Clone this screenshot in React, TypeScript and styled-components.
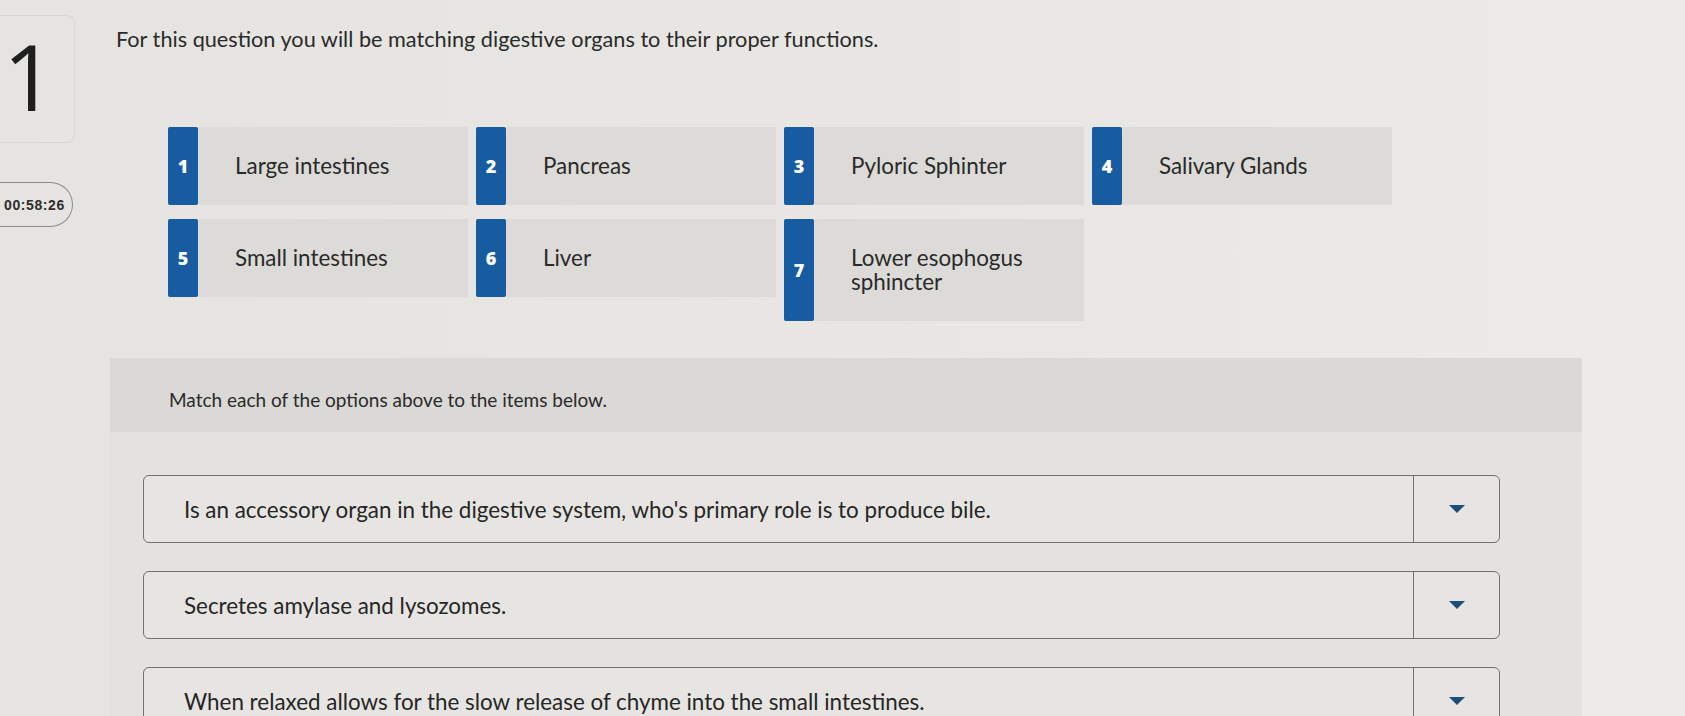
import styled, { createGlobalStyle } from "styled-components";

const GlobalStyle = createGlobalStyle`
  html, body {
    margin: 0;
    padding: 0;
    background: #e7e6e2;
  }
  body {
    font-family: Lato, "Open Sans", Arial, sans-serif;
    color: #2b2b2b;
  }
`;

const options = [
  "Large intestines",
  "Pancreas",
  "Pyloric Sphinter",
  "Salivary Glands",
  "Small intestines",
  "Liver",
  "Lower esophogus sphincter",
];

const items = [
  "Is an accessory organ in the digestive system, who's primary role is to produce bile.",
  "Secretes amylase and lysozomes.",
  "When relaxed allows for the slow release of chyme into the small intestines.",
];

export default function App() {
  return (
    <>
      <GlobalStyle />
      <Page>
        <Side>
          <NumberBox>
            <Num>1</Num>
          </NumberBox>
          <Timer>00:58:26</Timer>
        </Side>
        <Main>
          <Prompt>
            For this question you will be matching digestive organs to their proper functions.
          </Prompt>
          <Options>
            {options.map((label, i) => (
              <Option key={label}>
                <Badge>{i + 1}</Badge>
                <OptionText>{label}</OptionText>
              </Option>
            ))}
          </Options>
          <Panel>
            <PanelHead>Match each of the options above to the items below.</PanelHead>
            <Rows>
              {items.map((text) => (
                <Select key={text}>
                  <SelectText>{text}</SelectText>
                  <SelectArrow>
                    <svg width="16" height="8" viewBox="0 0 16 8">
                      <path d="M0 0 L16 0 L8 8 Z" fill="#1f4c78" />
                    </svg>
                  </SelectArrow>
                </Select>
              ))}
            </Rows>
          </Panel>
        </Main>
      </Page>
    </>
  );
}

const Page = styled.div`
  display: grid;
  grid-template-columns: 110px 1472px;
  height: 716px;
  overflow: hidden;
  background: linear-gradient(90deg, #e5e4e0 0%, #e8e7e3 60%, #ecebe7 100%);
`;

const Side = styled.div`
  display: flex;
  flex-direction: column;
  align-items: flex-start;
`;

const NumberBox = styled.div`
  margin-top: 15px;
  width: 75px;
  height: 128px;
  box-sizing: border-box;
  border: 1px solid #d8d7d3;
  border-left: none;
  border-radius: 0 8px 8px 0;
  display: flex;
  align-items: center;
  padding-left: 3px;
`;

const Num = styled.div`
  font-family: "Open Sans", Arial, sans-serif;
  font-weight: 400;
  font-size: 92px;
  line-height: 1;
  color: #1e1e1e;
  margin-top: -6px;
`;

const Timer = styled.div`
  margin-top: 39px;
  width: 73px;
  height: 45px;
  box-sizing: border-box;
  border: 1.5px solid #8b8b88;
  border-left: none;
  border-radius: 0 23px 23px 0;
  display: flex;
  align-items: center;
  padding-left: 4px;
  font-family: "Liberation Sans", Arial, sans-serif;
  font-weight: 700;
  font-size: 14px;
  letter-spacing: 0.6px;
  color: #2e2e2e;
`;

const Main = styled.div`
  padding-top: 26px;
  display: flex;
  flex-direction: column;
`;

const Prompt = styled.div`
  padding-left: 6px;
  font-size: 21.7px;
  line-height: 26px;
  color: #2a2a2a;
`;

const Options = styled.div`
  margin-top: 75px;
  margin-left: 58px;
  display: grid;
  grid-template-columns: repeat(4, 300px);
  column-gap: 8px;
  row-gap: 14px;
  align-items: start;
`;

const Option = styled.div`
  display: flex;
  min-height: 78px;
  background: #dcdbd7;
`;

const Badge = styled.div`
  flex: 0 0 30px;
  background: #175ca0;
  border-radius: 2px;
  color: #ffffff;
  font-family: "Open Sans", Arial, sans-serif;
  font-weight: 800;
  font-size: 18px;
  display: flex;
  align-items: center;
  justify-content: center;
`;

const OptionText = styled.div`
  padding: 27px 40px 27px 37px;
  font-size: 22.4px;
  line-height: 24px;
  color: #2a2a2a;
`;

const Panel = styled.div`
  margin-top: 37px;
  background: #e3e2de;
  flex: 1;
`;

const PanelHead = styled.div`
  height: 74px;
  box-sizing: border-box;
  padding: 30px 0 0 59px;
  background: #dad9d5;
  font-size: 19px;
  line-height: 23px;
  color: #2a2a2a;
`;

const Rows = styled.div`
  padding: 43px 82px 0 33px;
  display: flex;
  flex-direction: column;
  gap: 28px;
`;

const Select = styled.div`
  display: flex;
  height: 68px;
  box-sizing: border-box;
  border: 1.5px solid #72726f;
  border-radius: 6px;
  background: #e6e5e1;
`;

const SelectText = styled.div`
  flex: 1;
  display: flex;
  align-items: center;
  padding-left: 40px;
  font-size: 22.4px;
  color: #262626;
`;

const SelectArrow = styled.div`
  flex: 0 0 85px;
  border-left: 1.5px solid #72726f;
  display: flex;
  align-items: center;
  justify-content: center;
`;
